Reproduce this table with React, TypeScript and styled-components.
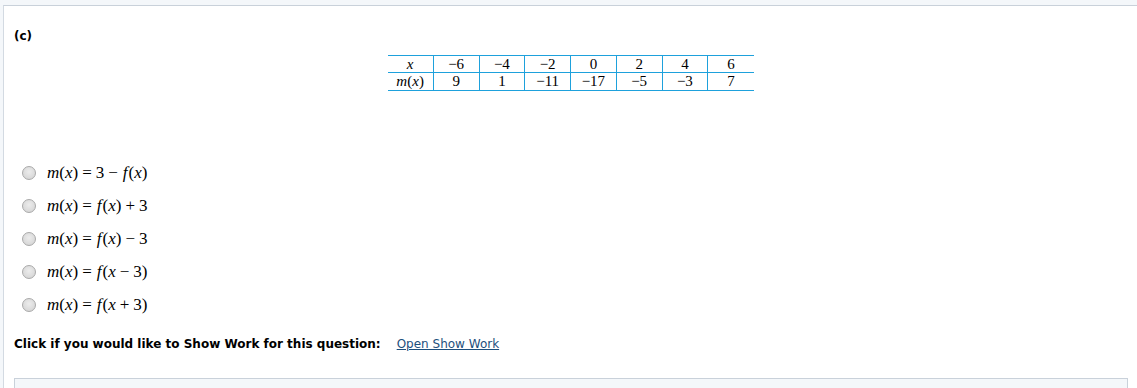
import React from "react";
import styled, { createGlobalStyle } from "styled-components";

const Global = createGlobalStyle`
  html, body { margin: 0; padding: 0; background: #f4f7fa; }
  body { font-family: "DejaVu Sans", Verdana, sans-serif; color: #000; }
`;

const Page = styled.div`
  padding: 5px 0 0 3px;
  background: #f4f7fa;
  height: 383px;
`;

const Panel = styled.div`
  background: #fff;
  border-top: 1px solid #c9d1da;
  border-left: 1px solid #d3dae2;
  height: 100%;
  padding: 0 9px 0 10px;
  display: flex;
  flex-direction: column;
`;

const PartLabel = styled.div`
  margin-top: 23px;
  font-size: 12px;
  font-weight: bold;
  line-height: 14px;
`;

const TableWrap = styled.div`
  display: flex;
  justify-content: center;
  margin-top: 12px;
  padding-right: 1px;
`;

const ValueTable = styled.table`
  border-collapse: collapse;
  table-layout: fixed;
  width: 366px;
  font-family: "Liberation Serif", "Times New Roman", serif;
  font-size: 15px;
  border-top: 1px solid #1ea1dc;
  border-bottom: 1px solid #1ea1dc;
`;

const Row = styled.tr<{ $first?: boolean }>`
  border-bottom: ${(p) => (p.$first ? "1px solid #1ea1dc" : "none")};
`;

const Cell = styled.td<{ $tall?: boolean }>`
  padding: 0;
  text-align: center;
  height: ${(p) => (p.$tall ? "17px" : "16px")};
  line-height: ${(p) => (p.$tall ? "17px" : "16px")};
  border-left: 1px solid #1ea1dc;
  &:first-child { border-left: none; }
`;

const Options = styled.div`
  margin-top: 72px;
  display: flex;
  flex-direction: column;
  gap: 13px;
`;

const Option = styled.label`
  display: flex;
  align-items: center;
  height: 20px;
  padding-left: 8px;
`;

const Radio = styled.span`
  width: 12px;
  height: 12px;
  border-radius: 50%;
  border: 1px solid #a9a9a9;
  background: radial-gradient(circle at 50% 40%, #ececec 0%, #d9d9d9 70%, #cfcfcf 100%);
  flex: none;
`;

const MathText = styled.span`
  margin-left: 11px;
  font-family: "Liberation Serif", "Times New Roman", serif;
  font-size: 17px;
  line-height: 20px;
  white-space: pre;
`;

const V = styled.i`
  font-style: italic;
`;

const Fn = styled.i`
  font-style: italic;
  margin: 0 1px 0 1px;
`;

const Op = styled.span`
  margin: 0 4px;
`;

const ShowWork = styled.div`
  margin-top: 21px;
  display: flex;
  align-items: center;
  gap: 16px;
  font-size: 12px;
  line-height: 16px;
`;

const Prompt = styled.span`
  font-weight: bold;
`;

const WorkLink = styled.a`
  color: #1d4f7d;
  text-decoration: underline;
  cursor: pointer;
`;

const WorkBox = styled.div`
  margin-top: 26px;
  height: 20px;
  background: #f4f7fa;
  border: 1px solid #c9d1da;
  border-bottom: none;
`;

const MINUS = "\u2212";
const xs = [MINUS + "6", MINUS + "4", MINUS + "2", "0", "2", "4", "6"];
const ms = ["9", "1", MINUS + "11", MINUS + "17", MINUS + "5", MINUS + "3", "7"];

const M = () => (
  <>
    <V>m</V>(<V>x</V>)
  </>
);

const F = () => <Fn>f</Fn>;

const answers: React.ReactNode[] = [
  <>
    <M /><Op>=</Op>3<Op>{MINUS}</Op><F />(<V>x</V>)
  </>,
  <>
    <M /><Op>=</Op><F />(<V>x</V>)<Op>+</Op>3
  </>,
  <>
    <M /><Op>=</Op><F />(<V>x</V>)<Op>{MINUS}</Op>3
  </>,
  <>
    <M /><Op>=</Op><F />(<V>x</V><Op>{MINUS}</Op>3)
  </>,
  <>
    <M /><Op>=</Op><F />(<V>x</V><Op>+</Op>3)
  </>,
];

export default function App() {
  return (
    <>
      <Global />
      <Page>
        <Panel>
          <PartLabel>(c)</PartLabel>
          <TableWrap>
            <ValueTable>
              <tbody>
                <Row $first>
                  <Cell><V>x</V></Cell>
                  {xs.map((v, i) => (
                    <Cell key={i}>{v}</Cell>
                  ))}
                </Row>
                <Row>
                  <Cell $tall><M /></Cell>
                  {ms.map((v, i) => (
                    <Cell $tall key={i}>{v}</Cell>
                  ))}
                </Row>
              </tbody>
            </ValueTable>
          </TableWrap>
          <Options>
            {answers.map((a, i) => (
              <Option key={i}>
                <Radio />
                <MathText>{a}</MathText>
              </Option>
            ))}
          </Options>
          <ShowWork>
            <Prompt>Click if you would like to Show Work for this question:</Prompt>
            <WorkLink>Open Show Work</WorkLink>
          </ShowWork>
          <WorkBox />
        </Panel>
      </Page>
    </>
  );
}
